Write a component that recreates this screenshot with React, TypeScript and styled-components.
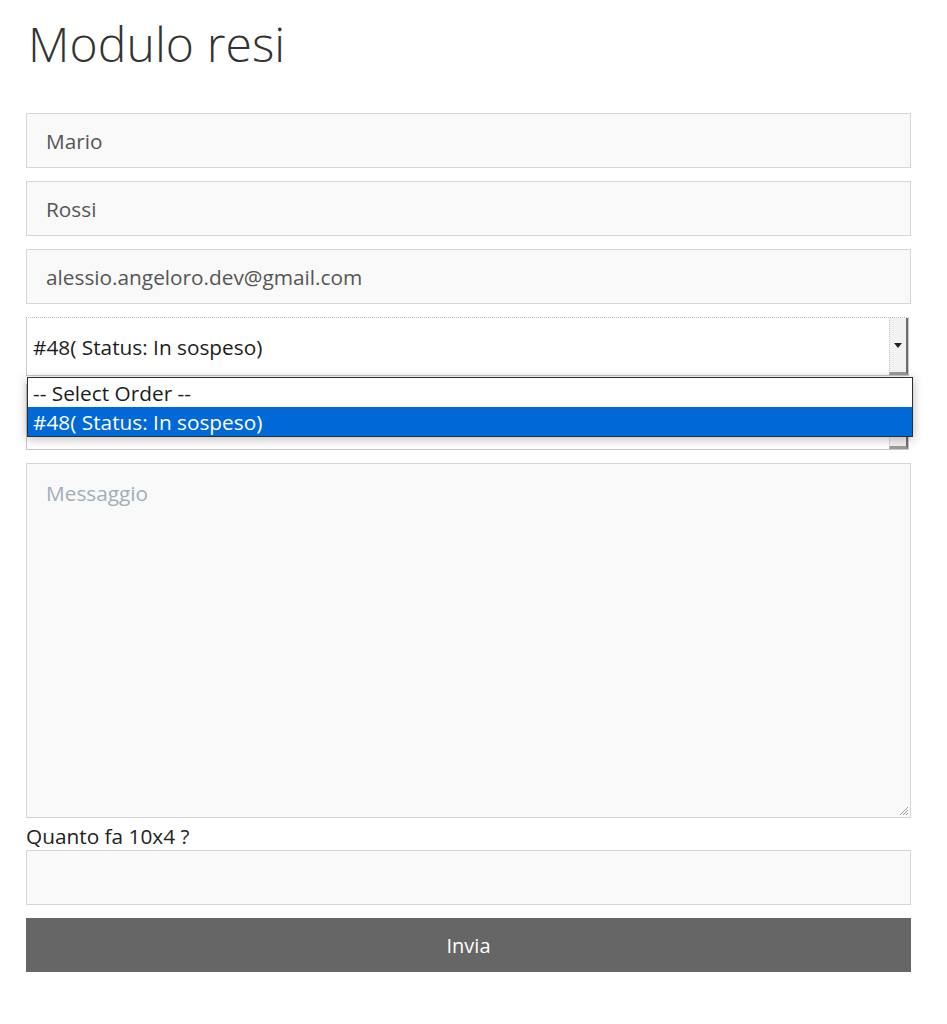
import React from "react";
import styled, { createGlobalStyle } from "styled-components";

const GlobalStyle = createGlobalStyle`
  html, body {
    margin: 0;
    padding: 0;
    background: #ffffff;
  }
  body {
    font-family: "Open Sans", "Noto Sans", sans-serif;
    color: #222;
  }
`;

const Page = styled.div`
  width: 885px;
  padding: 0 0 40px 26px;
  display: flex;
  flex-direction: column;
`;

const Title = styled.h1`
  margin: 11px 0 0 2px;
  font-size: 48px;
  font-weight: 300;
  line-height: 66px;
  color: #333;
  letter-spacing: 0.1px;
`;

const Form = styled.form`
  margin-top: 36px;
  display: flex;
  flex-direction: column;
`;

const TextField = styled.div<{ $gap?: number }>`
  box-sizing: border-box;
  height: 55px;
  margin-bottom: ${(p) => p.$gap ?? 13}px;
  border: 1px solid #d6d6d6;
  background: #f9f9f9;
  display: flex;
  align-items: center;
  padding-left: 19px;
  font-size: 20.8px;
  color: #555;
`;

const SelectWrap = styled.div`
  position: relative;
  display: flex;
  flex-direction: column;
  margin-bottom: 13px;
`;

const SelectBox = styled.div<{ $height: number; $gap: number }>`
  box-sizing: border-box;
  height: ${(p) => p.$height}px;
  margin-bottom: ${(p) => p.$gap}px;
  width: 883px;
  border: 1px solid #c8c8c8;
  border-top: 1px dotted #bdbdbd;
  background: #ffffff;
  display: flex;
  align-items: stretch;
`;

const SelectValue = styled.div`
  flex: 1;
  display: flex;
  align-items: center;
  padding-left: 6px;
  font-size: 20.8px;
  color: #1c1c1c;
`;

const ArrowButton = styled.div`
  width: 16px;
  background: #f2f2f2;
  border-left: 1px dotted #c4c4c4;
  border-right: 2px solid #6e6e6e;
  border-bottom: 3px solid #9a9a9a;
  display: flex;
  align-items: center;
  justify-content: center;
`;

/* open option list of the order select, floating over the field below */
const DropList = styled.ul`
  position: absolute;
  left: 1px;
  top: 60px;
  width: 884px;
  margin: 0;
  padding: 0;
  list-style: none;
  background: #fff;
  border: 1px solid #2e2e2e;
  box-shadow: 0 2px 10px rgba(0, 0, 0, 0.28);
  z-index: 2;
`;

const DropItem = styled.li<{ $active?: boolean }>`
  height: 29px;
  display: flex;
  align-items: center;
  padding-left: 5px;
  font-size: 20.8px;
  color: ${(p) => (p.$active ? "#ffffff" : "#1c1c1c")};
  background: ${(p) => (p.$active ? "#0068d7" : "#ffffff")};
`;

const MessageArea = styled.div`
  position: relative;
  box-sizing: border-box;
  height: 355px;
  border: 1px solid #d6d6d6;
  background: #f9f9f9;
  padding: 15px 19px;
  font-size: 20.8px;
  color: #a3adb8;
`;

const ResizeGrip = styled.svg`
  position: absolute;
  right: 1px;
  bottom: 1px;
`;

const Label = styled.label`
  margin-top: 4px;
  font-size: 20.8px;
  color: #222;
  line-height: 28px;
`;

const SubmitButton = styled.button`
  height: 54px;
  border: none;
  background: #666666;
  color: #ffffff;
  font-family: "Open Sans", sans-serif;
  font-size: 20px;
  cursor: pointer;
`;

const Caret = () => (
  <svg width="8" height="5" viewBox="0 0 8 5">
    <path d="M0 0h8L4 5z" fill="#222" />
  </svg>
);

export default function App() {
  return (
    <>
      <GlobalStyle />
      <Page>
        <Title>Modulo resi</Title>
        <Form onSubmit={(e) => e.preventDefault()}>
          <TextField>Mario</TextField>
          <TextField>Rossi</TextField>
          <TextField>alessio.angeloro.dev@gmail.com</TextField>
          <SelectWrap>
            <SelectBox $height={59} $gap={8}>
              <SelectValue>#48( Status: In sospeso)</SelectValue>
              <ArrowButton>
                <Caret />
              </ArrowButton>
            </SelectBox>
            <SelectBox $height={66} $gap={0}>
              <SelectValue />
              <ArrowButton />
            </SelectBox>
            <DropList>
              <DropItem>-- Select Order --</DropItem>
              <DropItem $active>#48( Status: In sospeso)</DropItem>
            </DropList>
          </SelectWrap>
          <MessageArea>
            Messaggio
            <ResizeGrip width="12" height="12" viewBox="0 0 12 12">
              <path d="M11 3L3 11M11 6L6 11M11 9L9 11" stroke="#9a9a9a" strokeWidth="1" />
            </ResizeGrip>
          </MessageArea>
          <Label>Quanto fa 10x4 ?</Label>
          <TextField />
          <SubmitButton type="submit">Invia</SubmitButton>
        </Form>
      </Page>
    </>
  );
}
